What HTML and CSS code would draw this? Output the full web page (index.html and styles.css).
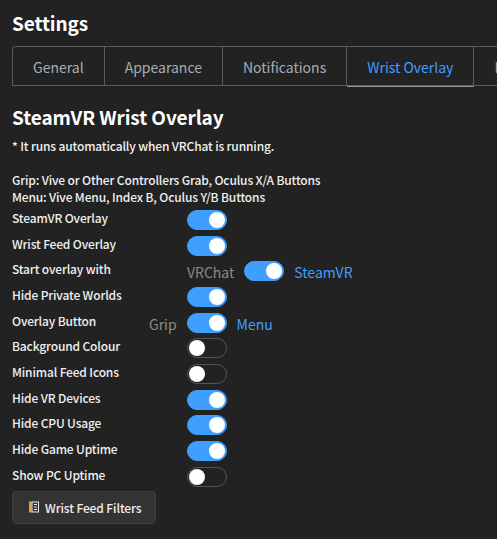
FILE: index.html
```html
<!DOCTYPE html>
<html lang="en">
<head>
  <meta charset="UTF-8">
  <title>Settings</title>
  <link rel="stylesheet" href="styles.css">
</head>
<body>
<div class="page">
  <h1 class="page__title">Settings</h1>

  <div class="tabs">
    <div class="tabs__item">General</div>
    <div class="tabs__item">Appearance</div>
    <div class="tabs__item">Notifications</div>
    <div class="tabs__item is-active">Wrist Overlay</div>
    <div class="tabs__item">Discord Presence</div>
  </div>

  <h2 class="section__title">SteamVR Wrist Overlay</h2>
  <p class="section__note">* It runs automatically when VRChat is running.</p>
  <p class="section__help">Grip: Vive or Other Controllers Grab, Oculus X/A Buttons<br>Menu: Vive Menu, Index B, Oculus Y/B Buttons</p>

  <div class="options">
    <div class="option">
      <span class="option__name">SteamVR Overlay</span>
      <div class="option__control"><span class="switch is-on"></span></div>
    </div>
    <div class="option">
      <span class="option__name">Wrist Feed Overlay</span>
      <div class="option__control"><span class="switch is-on"></span></div>
    </div>
    <div class="option">
      <span class="option__name">Start overlay with</span>
      <div class="option__control">
        <span class="switch-label switch-label--left">VRChat</span>
        <span class="switch is-on"></span>
        <span class="switch-label is-active">SteamVR</span>
      </div>
    </div>
    <div class="option">
      <span class="option__name">Hide Private Worlds</span>
      <div class="option__control"><span class="switch is-on"></span></div>
    </div>
    <div class="option">
      <span class="option__name">Overlay Button</span>
      <div class="option__control option__control--wide">
        <span class="switch-label switch-label--left">Grip</span>
        <span class="switch is-on"></span>
        <span class="switch-label is-active">Menu</span>
      </div>
    </div>
    <div class="option">
      <span class="option__name">Background Colour</span>
      <div class="option__control"><span class="switch"></span></div>
    </div>
    <div class="option">
      <span class="option__name">Minimal Feed Icons</span>
      <div class="option__control"><span class="switch"></span></div>
    </div>
    <div class="option">
      <span class="option__name">Hide VR Devices</span>
      <div class="option__control"><span class="switch is-on"></span></div>
    </div>
    <div class="option">
      <span class="option__name">Hide CPU Usage</span>
      <div class="option__control"><span class="switch is-on"></span></div>
    </div>
    <div class="option">
      <span class="option__name">Hide Game Uptime</span>
      <div class="option__control"><span class="switch is-on"></span></div>
    </div>
    <div class="option">
      <span class="option__name">Show PC Uptime</span>
      <div class="option__control"><span class="switch"></span></div>
    </div>
  </div>

  <button class="button" type="button">
    <svg class="button__icon" width="10" height="12" viewBox="0 0 10 12">
      <rect x="0" y="0.5" width="2.5" height="11" fill="#d9a441"/>
      <rect x="3" y="1" width="6.5" height="10" fill="none" stroke="#e8e8e8"/>
      <path d="M5 3.5h3M5 6h3M5 8.5h3" stroke="#e8e8e8" fill="none"/>
    </svg>
    Wrist Feed Filters
  </button>
</div>
</body>
</html>
```

FILE: styles.css
```css
html, body {
  margin: 0;
  padding: 0;
  height: 100%;
  overflow: hidden;
}
body {
  background: #222222;
  color: #f0f0f0;
  font-family: "Noto Sans CJK JP", "Noto Sans", sans-serif;
  font-size: 12px;
  letter-spacing: -0.15px;
}
.page {
  padding: 0 0 0 12px;
  border-left: 2px solid #2a2a2a;
  margin-left: -2px;
}
.page__title {
  margin: 0;
  padding-top: 8px;
  font-size: 19px;
  line-height: 30px;
  font-weight: 700;
  letter-spacing: -0.1px;
  color: #ffffff;
}
.tabs {
  display: flex;
  height: 40px;
  margin-top: 8px;
  box-sizing: border-box;
  border: 1px solid #5c5c5c;
  border-right: none;
  border-radius: 4px 0 0 0;
  width: 600px;
}
.tabs__item {
  padding: 0 20px;
  line-height: 40px;
  font-size: 14px;
  letter-spacing: 0;
  color: #a6adb5;
  border-right: 1px solid #5c5c5c;
  white-space: nowrap;
}
.tabs__item.is-active {
  color: #409eff;
  border-bottom: 1px solid #9a9a9a;
  height: 39px;
  margin-bottom: -1px;
}
.section__title {
  margin: 0;
  padding-top: 16px;
  font-size: 19px;
  line-height: 30px;
  font-weight: 700;
  letter-spacing: -0.1px;
  color: #ffffff;
}
.section__note {
  margin: 5px 0 0;
  line-height: 18px;
  font-weight: 500;
}
.section__help {
  margin: 16px 0 0;
  line-height: 17px;
  font-weight: 500;
}
.options {
  display: flex;
  flex-direction: column;
  margin-top: 2px;
}
.option {
  display: flex;
  align-items: center;
  height: 25.7px;
  font-weight: 500;
}
.option__name {
  width: 175px;
  white-space: nowrap;
  margin-top: -5px;
}
.option__control {
  display: flex;
  align-items: center;
}
.switch {
  display: block;
  position: relative;
  width: 40px;
  height: 20px;
  box-sizing: border-box;
  border: 1px solid #555555;
  border-radius: 10px;
  background: #222222;
}
.switch::after {
  content: "";
  position: absolute;
  top: 1px;
  left: 1px;
  width: 16px;
  height: 16px;
  border-radius: 50%;
  background: #ffffff;
}
.switch.is-on {
  background: #409eff;
  border-color: #409eff;
}
.switch.is-on::after {
  left: 21px;
}
.switch-label {
  margin-left: 10px;
  padding-top: 2px;
  font-size: 14px;
  font-weight: 400;
  letter-spacing: 0;
  color: #8a8a8a;
}
.switch-label--left {
  margin-left: 0;
  margin-right: 10px;
}
.switch-label.is-active {
  color: #409eff;
}
.option__control--wide {
  margin-left: -38px;
}
.button {
  display: flex;
  align-items: center;
  gap: 6px;
  margin-top: 1px;
  height: 33px;
  padding: 0 14px 0 16px;
  background: #333333;
  border: 1px solid #3e3e3e;
  border-radius: 4px;
  color: #f0f0f0;
  font-family: inherit;
  font-size: 12px;
  font-weight: 500;
  letter-spacing: -0.1px;
}
```
